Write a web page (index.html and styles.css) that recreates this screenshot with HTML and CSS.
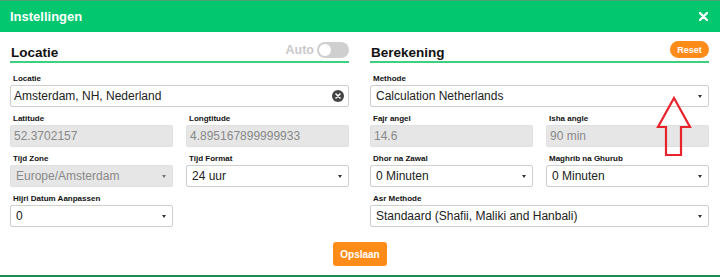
FILE: index.html
```html
<!DOCTYPE html>
<html>
<head>
<meta charset="utf-8">
<link rel="stylesheet" href="styles.css">
</head>
<body>
<div class="modal">
  <div class="modal-header">
    <span class="modal-title">Instellingen</span>
    <svg class="close" width="9" height="9" viewBox="0 0 9 9"><path d="M1 1L8 8M8 1L1 8" stroke="#fff" stroke-width="2.4" stroke-linecap="round"/></svg>
  </div>
  <div class="modal-body">
    <div class="col">
      <div class="sec-head">
        <span class="sec-title">Locatie</span>
        <div class="auto">
          <span class="auto-label">Auto</span>
          <span class="toggle"><span class="knob"></span></span>
        </div>
      </div>
      <div class="field">
        <label class="lbl">Locatie</label>
        <div class="input">
          <span class="val">Amsterdam, NH, Nederland</span>
          <svg class="clear" width="12" height="12" viewBox="0 0 12 12"><circle cx="6" cy="6" r="6" fill="#444"/><path d="M4 4L8 8M8 4L4 8" stroke="#fff" stroke-width="1.6" stroke-linecap="round"/></svg>
        </div>
      </div>
      <div class="row">
        <div class="field">
          <label class="lbl">Latitude</label>
          <div class="input disabled"><span class="val">52.3702157</span></div>
        </div>
        <div class="field">
          <label class="lbl">Longtitude</label>
          <div class="input disabled"><span class="val">4.895167899999933</span></div>
        </div>
      </div>
      <div class="row">
        <div class="field">
          <label class="lbl">Tijd Zone</label>
          <div class="input select disabled"><span class="val">Europe/Amsterdam</span><span class="caret"></span></div>
        </div>
        <div class="field">
          <label class="lbl">Tijd Format</label>
          <div class="input select"><span class="val">24 uur</span><span class="caret"></span></div>
        </div>
      </div>
      <div class="row">
        <div class="field">
          <label class="lbl">Hijri Datum Aanpassen</label>
          <div class="input select"><span class="val">0</span><span class="caret"></span></div>
        </div>
        <div class="field"></div>
      </div>
    </div>
    <div class="col">
      <div class="sec-head">
        <span class="sec-title">Berekening</span>
        <span class="reset">Reset</span>
      </div>
      <div class="field">
        <label class="lbl">Methode</label>
        <div class="input select"><span class="val">Calculation Netherlands</span><span class="caret"></span></div>
      </div>
      <div class="row">
        <div class="field">
          <label class="lbl">Fajr angel</label>
          <div class="input disabled"><span class="val">14.6</span></div>
        </div>
        <div class="field">
          <label class="lbl">Isha angle</label>
          <div class="input disabled"><span class="val">90 min</span></div>
        </div>
      </div>
      <div class="row">
        <div class="field">
          <label class="lbl">Dhor na Zawal</label>
          <div class="input select"><span class="val">0 Minuten</span><span class="caret"></span></div>
        </div>
        <div class="field">
          <label class="lbl">Maghrib na Ghurub</label>
          <div class="input select"><span class="val">0 Minuten</span><span class="caret"></span></div>
        </div>
      </div>
      <div class="field">
        <label class="lbl">Asr Methode</label>
        <div class="input select"><span class="val">Standaard (Shafii, Maliki and Hanbali)</span><span class="caret"></span></div>
      </div>
    </div>
  </div>
  <div class="modal-footer">
    <button class="save">Opslaan</button>
  </div>
  <svg class="arrow" width="40" height="66" viewBox="0 0 40 66"><path d="M18 2L34 31H25V59H10V31H2Z" fill="none" stroke="#e8232b" stroke-width="2.2" stroke-linejoin="miter"/></svg>
</div>
</body>
</html>
```
FILE: styles.css
```css
* { box-sizing: border-box; }
html, body { margin: 0; padding: 0; }
body {
  width: 720px;
  height: 277px;
  overflow: hidden;
  background: #fff;
  font-family: "Liberation Sans", Arial, sans-serif;
  color: #222;
}
.modal {
  position: relative;
  height: 277px;
  border-top: 1px solid #4d9f76;
  border-bottom: 2px solid #1f8a52;
}
.modal-header {
  height: 31px;
  background: #02c76f;
  display: flex;
  align-items: center;
  justify-content: space-between;
  padding: 0 11px 0 10px;
}
.modal-title {
  color: #fff;
  font-weight: bold;
  font-size: 13px;
}
.close { display: block; margin-right: 1px; }
.modal-body {
  display: flex;
  gap: 21px;
  padding: 8px 11px 0 10px;
}
.col { flex: 1; min-width: 0; }
.sec-head {
  height: 23px;
  display: flex;
  align-items: center;
  justify-content: space-between;
  border-bottom: 2px solid #3dd17f;
  margin-bottom: 10px;
  padding-left: 1px;
}
.sec-title {
  font-weight: bold;
  font-size: 13.5px;
  color: #111;
  margin-top: 3px;
}
.auto { display: flex; align-items: center; gap: 3px; margin-bottom: 2px; }
.auto-label { color: #c9c9c9; font-weight: bold; font-size: 12.5px; }
.toggle {
  width: 32px;
  height: 16px;
  border-radius: 8px;
  background: #cfcfcf;
  position: relative;
  display: block;
}
.knob {
  position: absolute;
  left: 2px;
  top: 2px;
  width: 12px;
  height: 12px;
  border-radius: 50%;
  background: #fff;
}
.reset {
  background: #ff8c19;
  color: #fff;
  font-weight: bold;
  font-size: 9px;
  border-radius: 9px;
  width: 39px;
  height: 17px;
  display: flex;
  align-items: center;
  justify-content: center;
  margin-bottom: 2px;
}
.row { display: flex; gap: 13px; }
.row .field { flex: 1; min-width: 0; }
.field { margin-bottom: 6px; }
.lbl {
  display: block;
  font-size: 8px;
  font-weight: bold;
  height: 12px;
  line-height: 12px;
  color: #111;
  padding-left: 3px;
}
.input {
  height: 22px;
  border: 1px solid #cfcfcf;
  border-radius: 2px;
  background: #fff;
  display: flex;
  align-items: center;
  padding: 0 5px 0 3px;
  font-size: 12px;
  color: #222;
  white-space: nowrap;
}
.input.select { padding-left: 5px; }
.input .val { flex: 1; overflow: hidden; }
.input.disabled { background: #e6e6e6; color: #888; border-color: #e0e0e0; }
.clear { display: block; margin-right: -1px; }
.caret {
  width: 0;
  height: 0;
  border-left: 2px solid transparent;
  border-right: 2px solid transparent;
  border-top: 3px solid #333;
  margin-right: 1px;
}
.disabled .caret { border-top-color: #777; }
.modal-footer {
  display: flex;
  justify-content: center;
  padding-top: 9px;
}
.save {
  background: #ff8c19;
  color: #fff;
  font-family: "Liberation Sans", Arial, sans-serif;
  font-weight: bold;
  font-size: 10px;
  border: none;
  border-radius: 3px;
  width: 54px;
  height: 24px;
  padding: 0;
}
.arrow {
  position: absolute;
  left: 656px;
  top: 95px;
}
```
